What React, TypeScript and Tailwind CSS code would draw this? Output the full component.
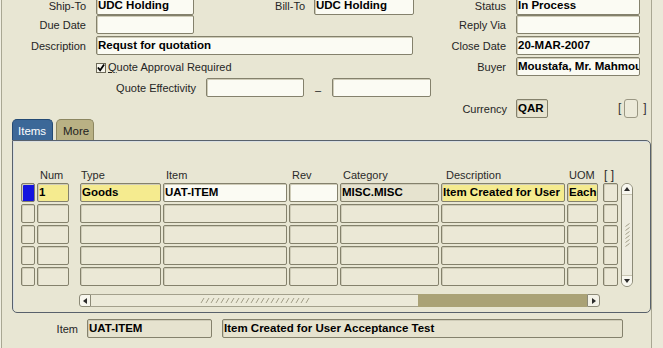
import React from 'react';

type Tone = 'white' | 'gray' | 'yellow' | 'cell' | 'blue';

const toneBg: Record<Tone, string> = {
  white: 'bg-[#fbfbf3]',
  gray: 'bg-[#e6e3cf]',
  yellow: 'bg-[#f5eb8f]',
  cell: 'bg-[#ebe8d6]',
  blue: 'bg-[#1414e0]',
};

function Field({ className = '', tone = 'white', children }: { className?: string; tone?: Tone; children?: React.ReactNode }) {
  return (
    <div
      className={`h-[19px] shrink-0 overflow-hidden whitespace-nowrap rounded-[2px] border border-[#84816c] pl-[1px] text-[11.5px] font-bold leading-[17px] text-black shadow-[inset_1px_1px_0_#cfccb8] ${toneBg[tone]} ${className}`}
    >
      {children}
    </div>
  );
}

function Label({ className = '', children }: { className?: string; children: React.ReactNode }) {
  return <div className={`shrink-0 whitespace-nowrap pt-[1px] text-right text-[11px] leading-[19px] text-[#252525] ${className}`}>{children}</div>;
}

function Grip({ vertical = false }: { vertical?: boolean }) {
  if (vertical) {
    return (
      <svg width="7" height="24" viewBox="0 0 7 24" aria-hidden>
        {Array.from({ length: 6 }).map((_, i) => (
          <line key={i} x1="1.5" y1={i * 4 + 3.5} x2="5.5" y2={i * 4 + 0.5} stroke="#a29e88" strokeWidth="1" />
        ))}
      </svg>
    );
  }
  return (
    <svg width="110" height="7" viewBox="0 0 110 7" aria-hidden>
      {Array.from({ length: 22 }).map((_, i) => (
        <line key={i} x1={i * 5 + 1} y1="6" x2={i * 5 + 4} y2="1" stroke="#a29e88" strokeWidth="1" />
      ))}
    </svg>
  );
}

function Arrow({ dir }: { dir: 'up' | 'down' | 'left' | 'right' }) {
  const pts = {
    up: '1,5 7,5 4,1',
    down: '1,1 7,1 4,5',
    left: '5,1 5,7 1,4',
    right: '1,1 1,7 5,4',
  }[dir];
  const vert = dir === 'up' || dir === 'down';
  return (
    <svg width={vert ? 8 : 6} height={vert ? 6 : 8} viewBox={vert ? '0 0 8 6' : '0 0 6 8'} aria-hidden>
      <polygon points={pts} fill="#2a2a2a" />
    </svg>
  );
}

const rows: { num?: string; type?: string; item?: string; rev?: string; cat?: string; desc?: string; uom?: string }[] = [
  { num: '1', type: 'Goods', item: 'UAT-ITEM', rev: '', cat: 'MISC.MISC', desc: 'Item Created for User', uom: 'Each' },
  {},
  {},
  {},
  {},
];

export default function App() {
  return (
    <div className="h-[348px] w-[663px] overflow-hidden bg-[#e8e6d3] font-['Liberation_Sans',Arial,sans-serif] shadow-[inset_1px_0_0_#f0efe2,inset_2px_0_0_#a9a793,inset_-11px_0_0_#ebe9d9,inset_-12px_0_0_#a9a793]">
      {/* header form */}
      <div className="mt-[-4px] flex flex-col">
        <div className="flex h-[19px] items-start">
          <Label className="w-[86px]">Ship-To</Label>
          <Field className="ml-[10px] w-[98px]">UDC Holding</Field>
          <Label className="w-[111px]">Bill-To</Label>
          <Field className="ml-[9px] w-[100px]">UDC Holding</Field>
          <Label className="w-[92px]">Status</Label>
          <Field className="ml-[10px] w-[124px]">In Process</Field>
        </div>
        <div className="flex h-[21px] items-start">
          <Label className="w-[86px]">Due Date</Label>
          <Field className="ml-[10px] w-[98px]" />
          <div className="w-[220px] shrink-0" />
          <Label className="w-[92px]">Reply Via</Label>
          <Field className="ml-[10px] w-[124px]" />
        </div>
        <div className="flex h-[21px] items-start">
          <Label className="w-[86px]">Description</Label>
          <Field className="ml-[10px] w-[317px]">Requst for quotation</Field>
          <div className="w-[1px] shrink-0" />
          <Label className="w-[92px]">Close Date</Label>
          <Field className="ml-[10px] w-[124px]">20-MAR-2007</Field>
        </div>
        <div className="flex h-[21px] items-start">
          <div className="flex w-[414px] shrink-0 items-center pl-[96px] pt-[1px]">
            <div className="flex h-[10px] w-[10px] items-center justify-center border border-[#6d6a58] bg-[#f6f5ec]">
              <svg width="9" height="9" viewBox="0 0 9 9" aria-hidden>
                <path d="M1 4.5 L3.5 7.5 L8 1" fill="none" stroke="#000" strokeWidth="2" />
              </svg>
            </div>
            <span className="ml-[2px] text-[11px] leading-[19px] text-[#252525]">
              <span className="underline">Q</span>uote Approval Required
            </span>
          </div>
          <Label className="w-[92px]">Buyer</Label>
          <Field className="ml-[10px] w-[124px]">Moustafa, Mr. Mahmoud</Field>
        </div>
        <div className="flex h-[21px] items-start">
          <Label className="w-[196px]">Quote Effectivity</Label>
          <Field className="ml-[10px] w-[98px]" />
          <span className="ml-[11px] w-[17px] shrink-0 pt-[3px] text-[11px] leading-[19px] text-[#252525]">–</span>
          <Field className="w-[99px]" />
        </div>
        <div className="flex h-[21px] items-start">
          <div className="w-[414px] shrink-0" />
          <Label className="w-[93px]">Currency</Label>
          <Field className="ml-[9px] w-[32px]" tone="gray">QAR</Field>
          <div className="ml-[70px] flex items-center text-[12px] leading-[19px] text-[#333]">
            <span>[</span>
            <div className="ml-[3px] h-[19px] w-[14px] rounded-[3px] border border-[#9a9783] bg-[#ecead9]" />
            <span className="ml-[5px]">]</span>
          </div>
        </div>
      </div>

      {/* tabs */}
      <div className="ml-[12px] mt-[-1px] flex h-[21px] items-end">
        <div className="h-[21px] w-[41px] rounded-t-[5px] border border-b-0 border-[#234a74] bg-[#3c6898] pl-[5px] pt-[3px] text-[11.5px] leading-[16px] text-white">
          Items
        </div>
        <div className="ml-[3px] h-[21px] w-[38px] rounded-t-[5px] border border-b-0 border-[#8c8660] bg-[#b9b184] pl-[6px] pt-[3px] text-[11.5px] leading-[16px] text-[#1e1e1e]">
          More
        </div>
      </div>

      {/* tab panel */}
      <div className="ml-[12px] h-[173px] w-[639px] rounded-b-[5px] rounded-tr-[5px] border border-[#58616b] shadow-[inset_1px_1px_0_#d9dfe2]">
        <div className="ml-[8px] mt-[27px] flex h-[14px] text-[11px] leading-[14px] text-[#2a2a2a]">
          <div className="w-[14px] shrink-0" />
          <div className="ml-[2px] w-[32px] shrink-0 pl-[3px]">Num</div>
          <div className="ml-[11px] w-[81px] shrink-0 pl-[1px]">Type</div>
          <div className="ml-[2px] w-[124px] shrink-0 pl-[3px]">Item</div>
          <div className="ml-[2px] w-[49px] shrink-0 pl-[3px]">Rev</div>
          <div className="ml-[2px] w-[99px] shrink-0 pl-[3px]">Category</div>
          <div className="ml-[2px] w-[124px] shrink-0 pl-[5px]">Description</div>
          <div className="ml-[2px] w-[31px] shrink-0 pl-[2px]">UOM</div>
          <div className="ml-[5px] w-[15px] shrink-0 pl-[1px] text-[12px]">[ ]</div>
        </div>

        <div className="ml-[8px] mt-[1px] flex">
          <div className="flex flex-col gap-[2px]">
            {rows.map((r, i) => {
              const first = i === 0;
              return (
                <div key={i} className="flex h-[19px]">
                  <Field className="w-[14px]" tone={first ? 'blue' : 'cell'} />
                  <Field className="ml-[2px] w-[32px]" tone={first ? 'yellow' : 'cell'}>{r.num}</Field>
                  <Field className="ml-[11px] w-[81px]" tone={first ? 'yellow' : 'cell'}>{r.type}</Field>
                  <Field className="ml-[2px] w-[124px]" tone={first ? 'white' : 'cell'}>{r.item}</Field>
                  <Field className="ml-[2px] w-[49px]" tone={first ? 'white' : 'cell'}>{r.rev}</Field>
                  <Field className="ml-[2px] w-[99px]" tone={first ? 'gray' : 'cell'}>{r.cat}</Field>
                  <Field className="ml-[2px] w-[124px]" tone={first ? 'yellow' : 'cell'}>{r.desc}</Field>
                  <Field className="ml-[2px] w-[31px]" tone={first ? 'yellow' : 'cell'}>{r.uom}</Field>
                  <Field className="ml-[5px] w-[15px]" tone="cell" />
                </div>
              );
            })}
          </div>
          <div className="ml-[3px] flex h-[104px] w-[12px] flex-col rounded-[6px] border border-[#8c8a77] bg-[#eeecdf]">
            <div className="flex h-[11px] items-center justify-center rounded-t-[5px] border-b border-[#c9c6b3] bg-[#f8f7ef]">
              <Arrow dir="up" />
            </div>
            <div className="flex flex-1 items-center justify-center">
              <Grip vertical />
            </div>
            <div className="flex h-[11px] items-center justify-center rounded-b-[5px] border-t border-[#c9c6b3] bg-[#f8f7ef]">
              <Arrow dir="down" />
            </div>
          </div>
        </div>

        <div className="ml-[66px] mt-[7px] flex h-[13px] w-[521px]">
          <div className="flex w-[12px] shrink-0 items-center justify-center rounded-l-[3px] border border-[#8c8a77] bg-[#f8f7ef]">
            <Arrow dir="left" />
          </div>
          <div className="flex w-[327px] shrink-0 items-center justify-center border-y border-[#a3a08c] bg-[#ecead9]">
            <Grip />
          </div>
          <div className="flex-1 bg-[#aaa276]" />
          <div className="flex w-[13px] shrink-0 items-center justify-center rounded-r-[3px] border border-[#8c8a77] bg-[#f3f2e7]">
            <Arrow dir="right" />
          </div>
        </div>
      </div>

      {/* footer fields */}
      <div className="mt-[6px] flex h-[19px] items-start">
        <Label className="w-[78px]">Item</Label>
        <Field className="ml-[9px] w-[125px]" tone="gray">UAT-ITEM</Field>
        <Field className="ml-[10px] w-[401px]" tone="gray">Item Created for User Acceptance Test</Field>
      </div>
    </div>
  );
}
